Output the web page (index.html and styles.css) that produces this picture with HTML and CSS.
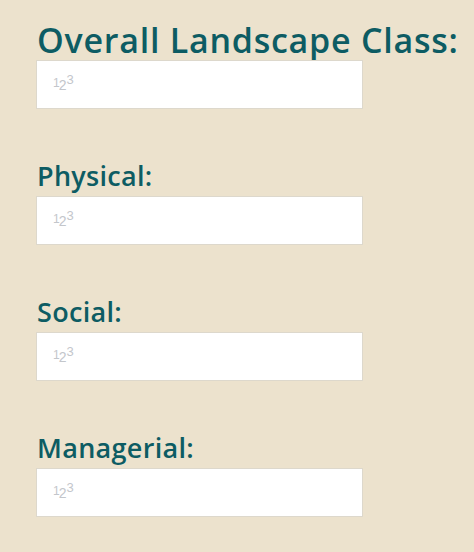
FILE: index.html
```html
<!DOCTYPE html>
<html>
<head>
<meta charset="utf-8">
<link rel="stylesheet" href="styles.css">
</head>
<body>
<div class="form">
  <div class="field field-main">
    <div class="label label-main">Overall Landscape Class:</div>
    <div class="box"><span class="ph"><span class="d1">1</span><span class="d2">2</span><span class="d3">3</span></span></div>
  </div>
  <div class="field">
    <div class="label">Physical:</div>
    <div class="box"><span class="ph"><span class="d1">1</span><span class="d2">2</span><span class="d3">3</span></span></div>
  </div>
  <div class="field">
    <div class="label">Social:</div>
    <div class="box"><span class="ph"><span class="d1">1</span><span class="d2">2</span><span class="d3">3</span></span></div>
  </div>
  <div class="field">
    <div class="label">Managerial:</div>
    <div class="box"><span class="ph"><span class="d1">1</span><span class="d2">2</span><span class="d3">3</span></span></div>
  </div>
</div>
</body>
</html>
```
FILE: styles.css
```css
html, body {
  margin: 0;
  padding: 0;
  background: #ece2cd;
  height: 100%;
}
body {
  font-family: "Open Sans", Lato, sans-serif;
}
.form {
  padding: 23px 0 0 36px;
  display: flex;
  flex-direction: column;
}
.field {
  display: flex;
  flex-direction: column;
  margin-top: 53px;
}
.field-main {
  margin-top: 0;
}
.label {
  color: #0d5c63;
  font-weight: 600;
  font-size: 27px;
  line-height: 27px;
  letter-spacing: 0.3px;
  margin-left: 1px;
  margin-bottom: 7px;
}
.label-main {
  font-size: 34px;
  line-height: 34px;
  letter-spacing: 0.75px;
  margin-bottom: 3px;
}
.box {
  width: 327px;
  height: 49px;
  box-sizing: border-box;
  background: #ffffff;
  border: 1px solid #ddd8cc;
  display: flex;
  align-items: center;
  padding-left: 16px;
}
.ph {
  font-family: "Liberation Sans", Arial, sans-serif;
  color: #c3c6cb;
  display: inline-flex;
  align-items: baseline;
  line-height: 1;
  margin-top: -3px;
}
.d1 {
  font-size: 12px;
  position: relative;
  top: -1px;
}
.d2 {
  font-size: 14px;
  position: relative;
  top: 2px;
  margin-left: -1px;
}
.d3 {
  font-size: 13px;
  position: relative;
  top: -4px;
}
```
